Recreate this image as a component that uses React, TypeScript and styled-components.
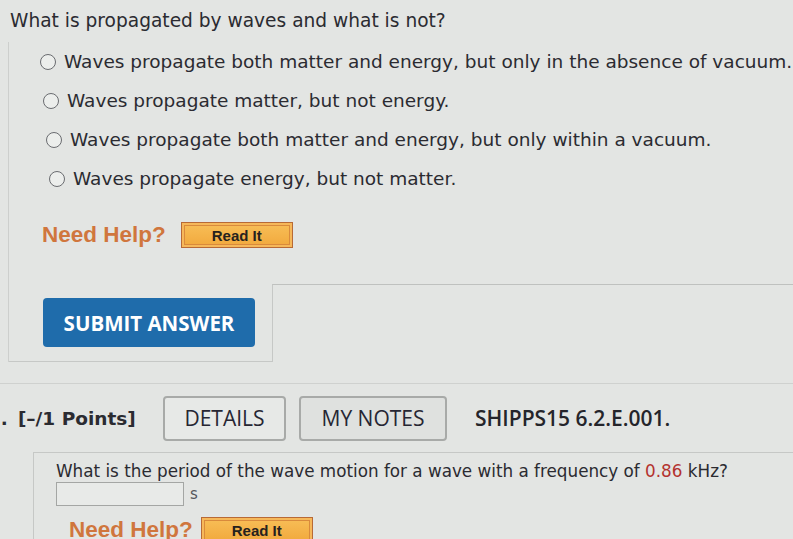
import React from "react";
import styled, { createGlobalStyle } from "styled-components";

const GlobalStyle = createGlobalStyle`
  html, body { margin: 0; padding: 0; background: #e3e5e3; overflow: hidden; }
  body { font-family: "DejaVu Sans", Verdana, sans-serif; color: #2b2b31; }
`;

const Page = styled.div`
  width: 793px;
  height: 539px;
  overflow: hidden;
  background: #e3e5e3;
`;

const Title = styled.div`
  font-size: 18.6px;
  line-height: 22px;
  padding: 10px 0 0 10px;
  white-space: nowrap;
`;

const QuestionPanel = styled.div`
  margin-left: 8px;
  margin-top: 10px;
  border-left: 1px solid #cdcfcd;
`;

const OptionList = styled.div`
  display: flex;
  flex-direction: column;
`;

const OptionRow = styled.label<{ $indent: number }>`
  display: flex;
  align-items: center;
  gap: 8px;
  height: 39px;
  padding-left: ${(p) => 31 + p.$indent}px;
  font-size: 18.5px;
  line-height: 22px;
  white-space: nowrap;
`;

const Radio = styled.span`
  width: 14px;
  height: 14px;
  border: 1.5px solid #6a6c70;
  border-radius: 50%;
  background: #eceeec;
  flex: none;
`;

const HelpRow = styled.div<{ $left: number; $gap: number }>`
  display: flex;
  align-items: center;
  gap: ${(p) => p.$gap}px;
  height: 26px;
  padding-left: ${(p) => p.$left}px;
`;

const NeedHelp = styled.span`
  font-family: "Liberation Sans", Arial, sans-serif;
  font-weight: 700;
  font-size: 22.5px;
  color: #d0763d;
`;

const ReadIt = styled.button`
  width: 112px;
  height: 26px;
  border: 1px solid #b86a36;
  background: linear-gradient(#f8bf58, #f1a83c);
  box-shadow: inset 0 0 0 2px #f6b85a, inset 0 0 0 3px #d98a3c;
  font-family: "Liberation Sans", Arial, sans-serif;
  font-weight: 700;
  font-size: 15px;
  color: #26221e;
  padding: 0;
`;

const SubmitRow = styled.div`
  display: flex;
  margin-top: 36px;
`;

const SubmitCell = styled.div`
  width: 263px;
  box-sizing: border-box;
  padding: 14px 0 14px 34px;
  border-bottom: 1px solid #c6c8c6;
`;

const SubmitButton = styled.button`
  width: 212px;
  height: 49px;
  border: none;
  border-radius: 4px;
  background: #1f6cab;
  color: #ffffff;
  font-family: "Open Sans", sans-serif;
  font-weight: 700;
  font-size: 20.5px;
  padding: 0;
`;

const SideBox = styled.div`
  flex: 1;
  border-top: 1px solid #bfc1bf;
  border-left: 1px solid #c6c8c6;
`;

const HeaderBar = styled.div`
  margin-top: 21px;
  border-top: 1px solid #cfd1cf;
  height: 68px;
  display: flex;
  align-items: center;
`;

const Points = styled.div`
  width: 175px;
  margin-left: -12px;
  flex: none;
  font-weight: 700;
  font-size: 18.5px;
  white-space: nowrap;
`;

const Num = styled.span`
  margin-right: 10px;
`;

const HeaderButton = styled.button<{ $w: number; $bg: string }>`
  width: ${(p) => p.$w}px;
  height: 45px;
  margin-right: 13px;
  border: 2px solid #a8aaa8;
  border-radius: 4px;
  background: ${(p) => p.$bg};
  font-family: "Open Sans", sans-serif;
  font-size: 21px;
  color: #262633;
  padding: 0;
`;

const QuestionCode = styled.div`
  margin-left: 15px;
  font-family: "Open Sans", sans-serif;
  font-weight: 600;
  font-size: 21px;
  color: #25252b;
  white-space: nowrap;
`;

const SecondPanel = styled.div`
  margin-left: 33px;
  border-left: 1px solid #c6c8c6;
  border-top: 1px solid #c6c8c6;
  padding: 8px 0 0 22px;
  height: 200px;
`;

const QuestionText = styled.div`
  font-size: 16.8px;
  line-height: 20px;
  white-space: nowrap;
`;

const Red = styled.span`
  color: #b3322f;
`;

const AnswerRow = styled.div`
  display: flex;
  align-items: center;
  gap: 6px;
  margin-top: 1px;
  font-size: 15px;
  color: #55575b;
`;

const AnswerInput = styled.div`
  width: 128px;
  height: 24px;
  box-sizing: border-box;
  border: 1px solid #a4a6a4;
  background: #e8eae8;
`;

const HelpWrap = styled.div<{ $top: number }>`
  margin-top: ${(p) => p.$top}px;
`;

export default function App() {
  const options = [
    "Waves propagate both matter and energy, but only in the absence of vacuum.",
    "Waves propagate matter, but not energy.",
    "Waves propagate both matter and energy, but only within a vacuum.",
    "Waves propagate energy, but not matter.",
  ];
  return (
    <Page>
      <GlobalStyle />
      <Title>What is propagated by waves and what is not?</Title>
      <QuestionPanel>
        <OptionList>
          {options.map((o, i) => (
            <OptionRow key={i} $indent={i * 3}>
              <Radio />
              {o}
            </OptionRow>
          ))}
        </OptionList>
        <HelpWrap $top={24}>
          <HelpRow $left={33} $gap={15}>
            <NeedHelp>Need Help?</NeedHelp>
            <ReadIt>Read It</ReadIt>
          </HelpRow>
        </HelpWrap>
        <SubmitRow>
          <SubmitCell>
            <SubmitButton>SUBMIT ANSWER</SubmitButton>
          </SubmitCell>
          <SideBox />
        </SubmitRow>
      </QuestionPanel>
      <HeaderBar>
        <Points>
          <Num>2.</Num>[–/1 Points]
        </Points>
        <HeaderButton $w={123} $bg="#e7e9e7">DETAILS</HeaderButton>
        <HeaderButton $w={148} $bg="#dfe1df">MY NOTES</HeaderButton>
        <QuestionCode>SHIPPS15 6.2.E.001.</QuestionCode>
      </HeaderBar>
      <SecondPanel>
        <QuestionText>
          What is the period of the wave motion for a wave with a frequency of <Red>0.86</Red> kHz?
        </QuestionText>
        <AnswerRow>
          <AnswerInput />s
        </AnswerRow>
        <HelpWrap $top={11}>
          <HelpRow $left={13} $gap={8}>
            <NeedHelp>Need Help?</NeedHelp>
            <ReadIt>Read It</ReadIt>
          </HelpRow>
        </HelpWrap>
      </SecondPanel>
    </Page>
  );
}
